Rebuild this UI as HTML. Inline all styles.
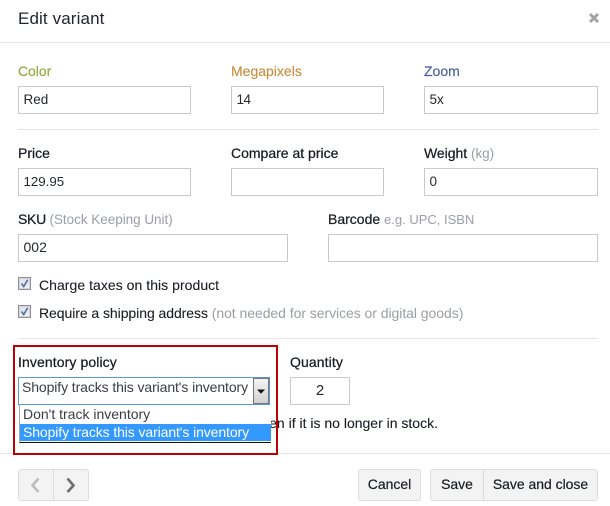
<!DOCTYPE html>
<html><head><meta charset="utf-8"><style>
html,body{margin:0;padding:0;background:#fff}
body{width:610px;height:506px;position:relative;overflow:hidden;font-family:"Liberation Sans",sans-serif;font-size:14px;color:#1a1d22}
.t{position:absolute;white-space:nowrap;line-height:16px}
.l{-webkit-text-stroke:.25px currentColor}
.g{color:#9b9ea3;-webkit-text-stroke:0}
.i{position:absolute;box-sizing:border-box;height:28px;border:1px solid #c9c9c9;background:#fff;padding:0 4.5px;line-height:25px;font-size:13.5px;color:#26292e}
.h{position:absolute;left:18px;width:580px;height:1px;background:#e6e6e6}
.c{position:absolute;left:18px;width:13px;height:13px;box-sizing:border-box;border:1px solid #8f8f96;background:linear-gradient(#dfe1e8,#f0f1f5);box-shadow:inset 0 0 0 1px #d4d5da}
.b{position:absolute;box-sizing:border-box;top:469px;height:32px;border:1px solid #dcdcdc;background:#f3f3f3;border-radius:3px;text-align:center;line-height:29px;font-size:14px;color:#1a1d22}
.b span{-webkit-text-stroke:.2px currentColor}
</style></head><body>
<div class="t" style="left:18px;top:10px;font-size:17px;line-height:18px;letter-spacing:.12px;color:#22262c">Edit variant</div>
<svg style="position:absolute;left:588px;top:12px" width="12" height="12" viewBox="0 0 12 12"><path d="M2 2L10 10M10 2L2 10" stroke="#a4a4a4" stroke-width="3"/></svg>
<div class="h" style="left:0;width:610px;top:42px"></div>

<div class="t" style="left:18px;top:63px;color:#8cad3c;-webkit-text-stroke:.15px currentColor;letter-spacing:-.05px">Color</div>
<div class="t" style="left:231px;top:63px;color:#c98f3f;-webkit-text-stroke:.15px currentColor">Megapixels</div>
<div class="t" style="left:424px;top:63px;color:#48609f;-webkit-text-stroke:.15px currentColor">Zoom</div>
<div class="i" style="left:18px;top:86px;width:173px">Red</div>
<div class="i" style="left:231px;top:86px;width:153px;letter-spacing:-.5px">14</div>
<div class="i" style="left:424px;top:86px;width:174px">5x</div>
<div class="h" style="top:129px"></div>

<div class="t l" style="left:18px;top:145px">Price</div>
<div class="t l" style="left:231px;top:145px">Compare at price</div>
<div class="t l" style="left:424px;top:145px;letter-spacing:-.03px">Weight <span class="g" style="font-size:13.5px">(kg)</span></div>
<div class="i" style="left:18px;top:168px;width:173px;font-size:13.3px">129.95</div>
<div class="i" style="left:231px;top:168px;width:153px"></div>
<div class="i" style="left:424px;top:168px;width:174px">0</div>

<div class="t l" style="left:18px;top:211px;letter-spacing:-.3px">SKU <span class="g" style="font-size:13.5px;letter-spacing:-.03px">(Stock Keeping Unit)</span></div>
<div class="t l" style="left:328px;top:211px;">Barcode <span class="g" style="font-size:13px">e.g. UPC, ISBN</span></div>
<div class="i" style="left:18px;top:234px;width:270px;font-size:14px">002</div>
<div class="i" style="left:328px;top:234px;width:270px"></div>

<div class="c" style="top:277px"><svg style="position:absolute;left:0;top:0" width="11" height="11" viewBox="0 0 11 11"><path d="M2.5 5.5L4.7 8.5L8.7 1.8" fill="none" stroke="#5a6fa8" stroke-width="1.7"/></svg></div>
<div class="t" style="left:39px;top:277px;letter-spacing:.04px;-webkit-text-stroke:.1px currentColor">Charge taxes on this product</div>
<div class="c" style="top:305px"><svg style="position:absolute;left:0;top:0" width="11" height="11" viewBox="0 0 11 11"><path d="M2.5 5.5L4.7 8.5L8.7 1.8" fill="none" stroke="#5a6fa8" stroke-width="1.7"/></svg></div>
<div class="t" style="left:39px;top:305px;letter-spacing:-.06px;-webkit-text-stroke:.1px currentColor">Require a shipping address <span class="g" style="letter-spacing:-.05px">(not needed for services or digital goods)</span></div>
<div class="h" style="top:338px"></div>

<div class="t l" style="left:18px;top:354px;letter-spacing:.1px">Inventory policy</div>
<div class="t l" style="left:290px;top:354px;letter-spacing:.1px">Quantity</div>
<div class="i" style="left:290px;top:377px;width:60px;text-align:center;font-size:15px;line-height:26px">2</div>

<div class="t" style="right:172px;top:415px;-webkit-text-stroke:.1px currentColor">en if it is no longer in stock.</div>

<div style="position:absolute;left:18px;top:377px;width:252px;height:28px;box-sizing:border-box;border:1px solid #5b95dc;background:#fff"></div>
<div class="t" style="left:22px;top:379px;color:#3a3d42;letter-spacing:-.1px">Shopify tracks this variant's inventory</div>
<div style="position:absolute;left:253px;top:378px;width:16px;height:26px;box-sizing:border-box;border:1px solid #777;background:linear-gradient(#f4f4f4,#d2d2d2)"><svg style="position:absolute;left:2px;top:10px" width="10" height="6" viewBox="0 0 10 6"><path d="M1 .5H9L5 4.8Z" fill="#111"/></svg></div>

<div style="position:absolute;left:19px;top:405px;width:252px;height:38px;box-sizing:border-box;background:#fff;border-left:1px solid #a8a8a8;border-bottom:1px solid #111"></div>
<div style="position:absolute;left:20px;top:424px;width:251px;height:17px;background:#3399ff"></div>
<div class="t" style="left:23px;top:406px;color:#3a3d42">Don't track inventory</div>
<div class="t" style="left:23px;top:424px;color:#fff;letter-spacing:-.1px">Shopify tracks this variant's inventory</div>

<div style="position:absolute;left:13px;top:345px;width:265px;height:110px;box-sizing:border-box;border:2px solid #c00000"></div>

<div class="h" style="left:0;width:13px;top:453px"></div>
<div class="h" style="left:278px;width:332px;top:453px"></div>

<div class="b" style="left:18px;width:71px"></div>
<div style="position:absolute;left:53px;top:470px;width:1px;height:30px;background:#dcdcdc"></div>
<svg style="position:absolute;left:28px;top:476px" width="16" height="18" viewBox="0 0 16 18"><path d="M10.5 2.5L4.5 9.5L10.5 16" fill="none" stroke="#bcbcbc" stroke-width="2.6"/></svg>
<svg style="position:absolute;left:63px;top:476px" width="16" height="18" viewBox="0 0 16 18"><path d="M4.5 2.5L10.5 9.5L4.5 16" fill="none" stroke="#6d6d6d" stroke-width="2.6"/></svg>

<div class="b" style="left:358px;width:63px"><span>Cancel</span></div>
<div class="b" style="left:430px;width:168px"></div>
<div style="position:absolute;left:483px;top:470px;width:1px;height:30px;background:#dcdcdc"></div>
<div class="b" style="left:431px;width:52px;border:0;background:none;line-height:31px"><span style="letter-spacing:-.05px">Save</span></div>
<div class="b" style="left:484px;width:113px;border:0;background:none;line-height:31px"><span style="letter-spacing:-.03px">Save and close</span></div>
</body></html>
